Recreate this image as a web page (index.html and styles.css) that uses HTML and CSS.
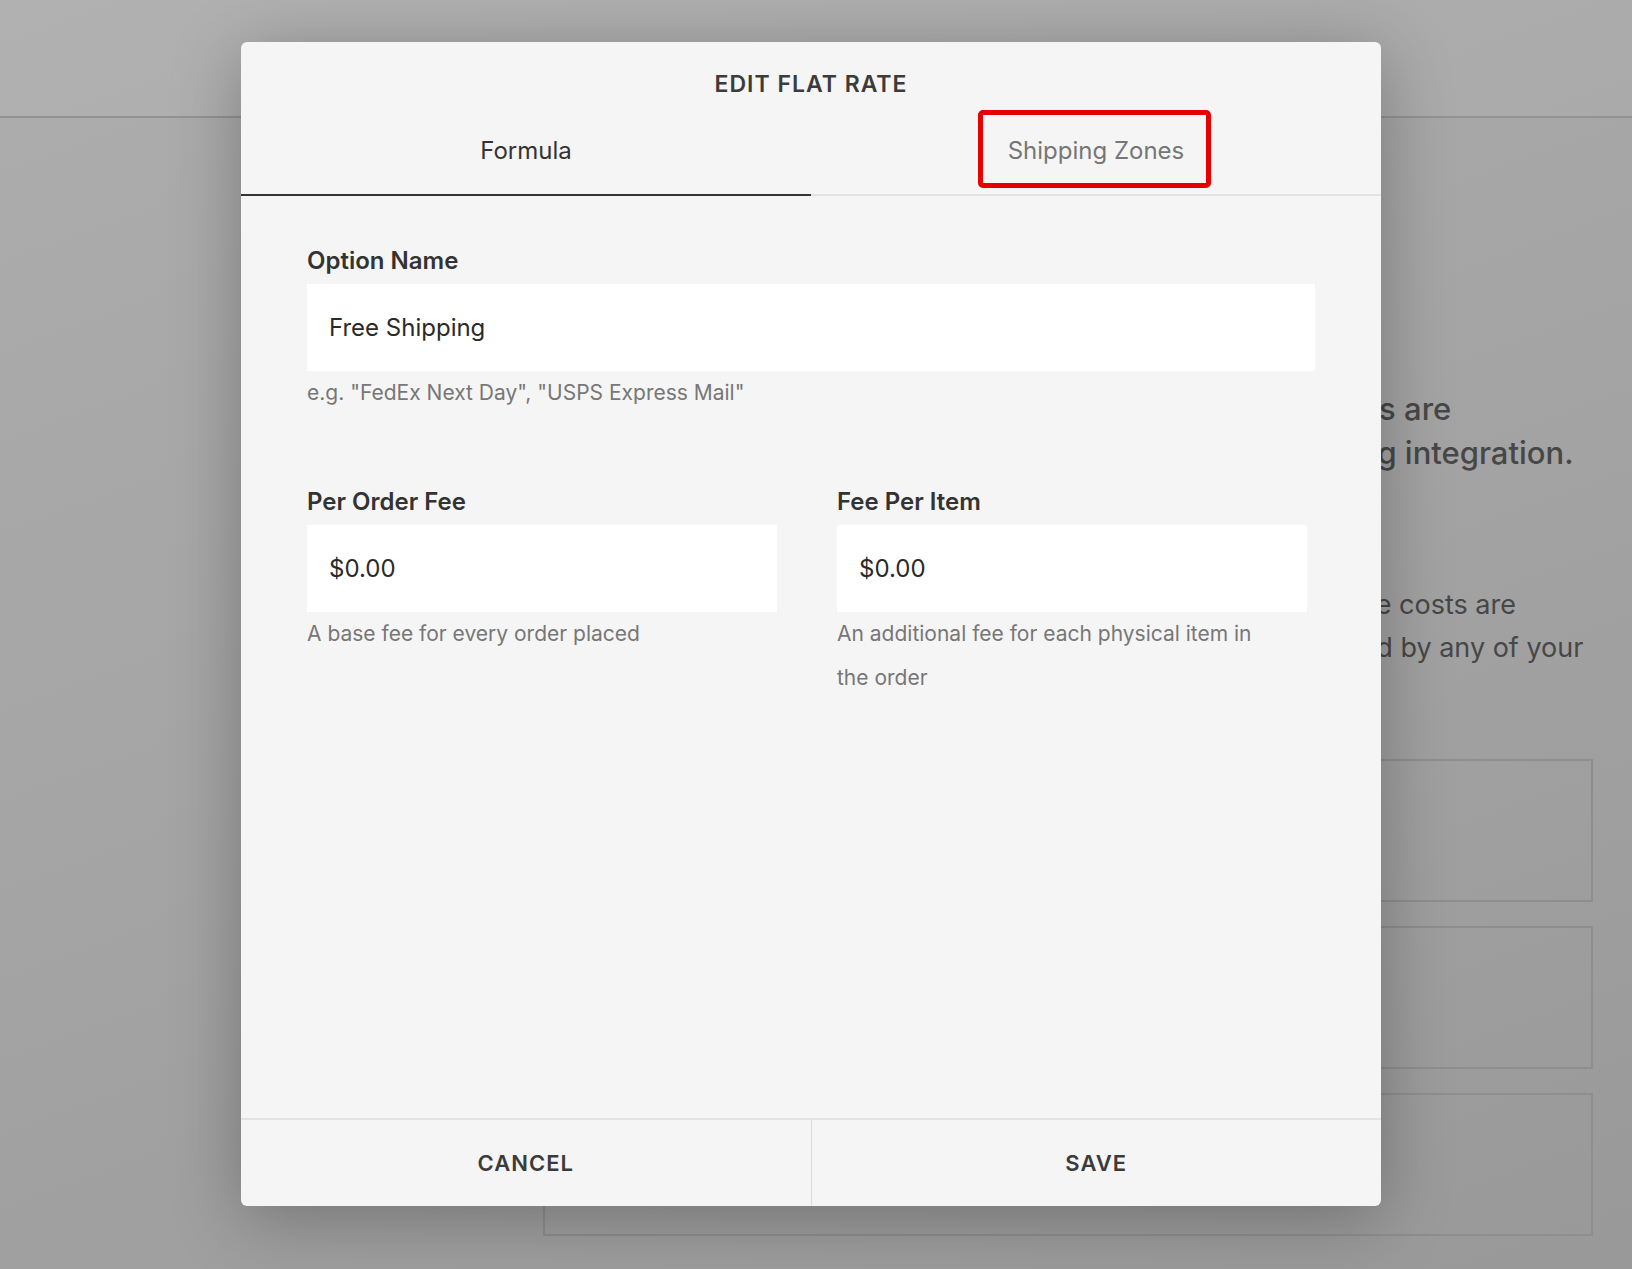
FILE: index.html
```html
<!doctype html>
<html lang="en">
<head>
	<meta charset="UTF-8">
	<title>Edit Flat Rate</title>
	<link rel="stylesheet" href="styles.css">
</head>
<body>
	<!-- dimmed page behind the dialog -->
	<div class="page">
		<header class="pageHead"></header>
		<main class="pageMain">
			<div class="pageIntro">
				<div>Custom flat rate and weight-based flexible shipping costs are</div>
				<div>useful for small online stores that don't yet use a shipping integration.</div>
			</div>
			<div class="pageNote">
				<div>Carrier calculated shipping means the exact real-time shipping fee costs are</div>
				<div>automatically set at checkout time for the carrier services selected by any of your</div>
			</div>
			<div class="pageBox"></div>
			<div class="pageBox"></div>
			<div class="pageBox"></div>
		</main>
	</div>

	<section class="modal">
		<h1 class="modalTitle">EDIT FLAT RATE</h1>
		<nav class="tabs">
			<div class="tab active">Formula</div>
			<div class="tab"><span class="marked">Shipping Zones</span></div>
		</nav>

		<div class="modalBody">
			<div class="field">
				<label class="fieldLabel" for="optionName">Option Name</label>
				<input class="fieldInput" id="optionName" type="text" value="Free Shipping">
				<p class="fieldHelp">e.g. "FedEx Next Day", "USPS Express Mail"</p>
			</div>

			<div class="fieldRow">
				<div class="field">
					<label class="fieldLabel" for="orderFee">Per Order Fee</label>
					<input class="fieldInput" id="orderFee" type="text" value="$0.00">
					<p class="fieldHelp">A base fee for every order placed</p>
				</div>
				<div class="field">
					<label class="fieldLabel" for="itemFee">Fee Per Item</label>
					<input class="fieldInput" id="itemFee" type="text" value="$0.00">
					<p class="fieldHelp">An additional fee for each physical item in the order</p>
				</div>
			</div>
		</div>

		<footer class="modalFooter">
			<button class="footerBtn">CANCEL</button>
			<button class="footerBtn">SAVE</button>
		</footer>
	</section>
</body>
</html>
```

FILE: styles.css
```css
html, body {
	margin: 0;
	height: 100%;
}
body {
	position: relative;
	overflow: hidden;
	font-family: Inter, "Liberation Sans", sans-serif;
	background: linear-gradient(160deg, #adadad 0%, #a3a3a3 55%, #999 100%);
}

/* The page under the overlay */
.pageHead {
	height: 116px;
	border-bottom: 2px solid #939393;
	background: rgba(255,255,255,.05);
}
.pageMain {
	width: 1050px;
	margin-left: 543px;
	color: #474747;
}
.pageIntro {
	padding-top: 269px;
	font-size: 31px;
	line-height: 44px;
	font-weight: 500;
	white-space: nowrap;
}
.pageNote {
	margin-top: 108px;
	font-size: 27px;
	line-height: 43px;
	white-space: nowrap;
}
.pageBox {
	height: 139px;
	border: 2px solid #8e8e8e;
	margin-top: 24px;
}
.pageNote + .pageBox {
	margin-top: 90px;
}

/* Dialog */
.modal {
	position: absolute;
	top: 42px;
	left: 241px;
	width: 1140px;
	height: 1164px;
	display: flex;
	flex-direction: column;
	background: #f5f5f5;
	border-radius: 6px;
	box-shadow: 0 12px 70px rgba(0,0,0,.28);
	overflow: hidden;
}
.modalTitle {
	margin: 0;
	padding-top: 28px;
	font-size: 23px;
	line-height: 28px;
	font-weight: 600;
	letter-spacing: 1px;
	text-align: center;
	color: #3b3b3b;
}

.tabs {
	display: flex;
	border-bottom: 2px solid #e3e3e3;
}
.tab {
	flex: 1;
	padding: 38px 0 28px;
	margin-bottom: -2px;
	border-bottom: 2px solid transparent;
	font-size: 24px;
	line-height: 30px;
	text-align: center;
	color: #767676;
}
.tab.active {
	color: #333;
	border-bottom-color: #333;
}
/* red annotation box round the second tab */
.marked {
	position: relative;
}
.marked::after {
	content: '';
	position: absolute;
	top: -26px; bottom: -23px; left: -30px; right: -27px;
	border: 5px solid #e60000;
	border-radius: 5px;
}

.modalBody {
	flex: 1;
	padding: 50px 66px 0;
}
.field {
	display: flex;
	flex-direction: column;
}
.fieldLabel {
	margin-bottom: 8px;
	font-size: 24px;
	line-height: 30px;
	font-weight: 600;
	color: #333;
}
.fieldInput {
	height: 87px;
	box-sizing: border-box;
	padding: 0 22px;
	border: none;
	background: #fff;
	font: 24px Inter, "Liberation Sans", sans-serif;
	color: #2a2a2a;
	outline: none;
}
.fieldHelp {
	margin: 0;
	font-size: 21px;
	line-height: 44px;
	color: #777;
}

.fieldRow {
	display: grid;
	grid-template-columns: 470px 470px;
	gap: 60px;
	margin-top: 72px;
}
.fieldRow .fieldHelp {
	padding-right: 20px;
}

.modalFooter {
	display: flex;
	height: 86px;
	border-top: 2px solid #e3e3e3;
}
.footerBtn {
	flex: 1;
	border: none;
	background: none;
	font: 600 22px Inter, "Liberation Sans", sans-serif;
	letter-spacing: 1px;
	color: #3b3b3b;
	cursor: pointer;
}
.footerBtn + .footerBtn {
	border-left: 1px solid #ddd;
}
```
